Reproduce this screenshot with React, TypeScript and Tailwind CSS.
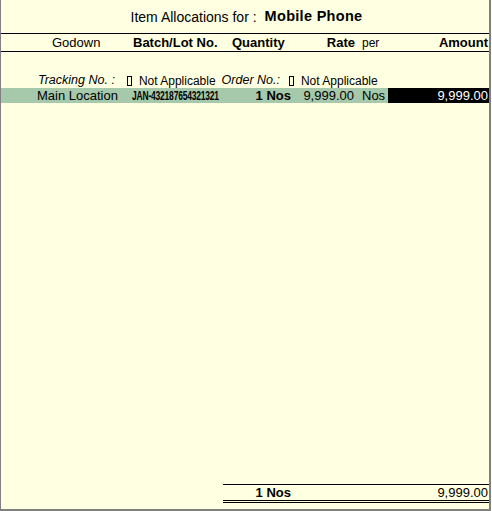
import React from "react";

const font = { fontFamily: '"Liberation Sans", Arial, sans-serif' };

const Box = () => (
  <span className="inline-block h-[10px] w-[5px] border border-black align-[-1px]" />
);

const App = () => {
  return (
    <div className="h-[511px] w-[492px] bg-[#ffffe1] text-[13px] text-black" style={font}>
      <div className="flex h-[511px] w-[491px] flex-col border-b-2 border-l border-r-2 border-[#808080]">
        {/* title */}
        <div className="flex h-[33px] items-center justify-center gap-[8px] pl-[3px] pt-[1px] text-[14px]">
          <span>Item Allocations for :</span>
          <span className="text-[14.5px] font-bold tracking-[0.3px]">Mobile Phone</span>
        </div>

        {/* column headings */}
        <div className="flex h-[19px] items-center border-y border-black leading-none">
          <div className="w-[132px] pl-[51px]">Godown</div>
          <div className="w-[99px] font-bold">Batch/Lot No.</div>
          <div className="w-[60px] font-bold">Quantity</div>
          <div className="w-[63px] text-right font-bold">Rate</div>
          <div className="w-[33px] pl-[7px] text-[12px]">per</div>
          <div className="flex-1 pr-[1px] text-right font-bold">Amount</div>
        </div>

        {/* tracking */}
        <div className="mt-[21px] flex h-[15px] items-center leading-none">
          <span className="pl-[37px] text-[12.5px] italic">Tracking No. :</span>
          <span className="ml-[12px]"><Box /></span>
          <span className="ml-[7px] text-[12px]">Not Applicable</span>
          <span className="ml-[6px] text-[12.5px] italic">Order No.:</span>
          <span className="ml-[9px]"><Box /></span>
          <span className="ml-[7px] text-[12px]">Not Applicable</span>
        </div>

        {/* allocation row */}
        <div className="flex h-[15px] items-center leading-none">
          <div className="flex h-full flex-1 items-center bg-[#a6c9ab]">
            <div className="w-[131px] pl-[36px]">Main Location</div>
            <div className="w-[98px] overflow-visible whitespace-nowrap">
              <span className="inline-block origin-left scale-x-[0.68] text-[12.5px] font-bold tracking-[-0.3px]">
                JAN-432187654321321
              </span>
            </div>
            <div className="w-[61px] text-right font-bold">1 Nos</div>
            <div className="w-[63px] text-right">9,999.00</div>
            <div className="w-[34px] pl-[8px]">Nos</div>
          </div>
          <div className="flex h-full w-[101px] items-center justify-end bg-black pr-[1px] text-white">
            9,999.00
          </div>
        </div>

        <div className="flex-1" />

        {/* totals */}
        <div className="ml-[222px] flex h-[16px] items-center border-t border-black leading-none">
          <div className="w-[68px] text-right font-bold">1 Nos</div>
          <div className="flex-1 pr-[1px] text-right">9,999.00</div>
        </div>
        <div className="mb-[6px] ml-[222px] h-[3px] border-y border-black" />
      </div>
    </div>
  );
};

export default App;
